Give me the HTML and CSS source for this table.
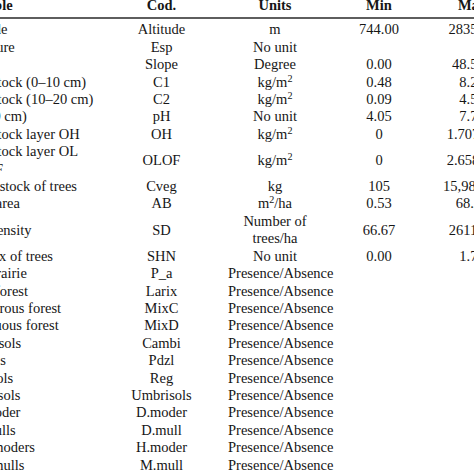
FILE: index.html
```html
<!DOCTYPE html>
<html lang="en">
<head>
<meta charset="utf-8">
<title>Variables</title>
<link rel="stylesheet" href="styles.css">
</head>
<body>
<table class="stats">
  <colgroup>
    <col class="c-var">
    <col class="c-cod">
    <col class="c-unit">
    <col class="c-min">
    <col class="c-max">
  </colgroup>
  <thead>
    <tr>
      <th class="lbl">Variable</th>
      <th>Cod.</th>
      <th>Units</th>
      <th>Min</th>
      <th>Max</th>
    </tr>
  </thead>
  <tbody>
    <tr><td class="lbl">Altitude</td><td>Altitude</td><td>m</td><td>744.00</td><td>2835.00</td></tr>
    <tr><td class="lbl">Exposure</td><td>Esp</td><td>No unit</td><td></td><td></td></tr>
    <tr><td class="lbl">Slope</td><td>Slope</td><td>Degree</td><td>0.00</td><td>48.590</td></tr>
    <tr><td class="lbl">SOC stock (0–10 cm)</td><td>C1</td><td>kg/m<sup>2</sup></td><td>0.48</td><td>8.25</td></tr>
    <tr><td class="lbl">SOC stock (10–20 cm)</td><td>C2</td><td>kg/m<sup>2</sup></td><td>0.09</td><td>4.55</td></tr>
    <tr><td class="lbl">pH (20 cm)</td><td>pH</td><td>No unit</td><td>4.05</td><td>7.75</td></tr>
    <tr><td class="lbl">SOC stock layer OH</td><td>OH</td><td>kg/m<sup>2</sup></td><td>0</td><td>1.707,88</td></tr>
    <tr><td class="lbl">SOC stock layer OL and OF</td><td>OLOF</td><td>kg/m<sup>2</sup></td><td>0</td><td>2.658,15</td></tr>
    <tr><td class="lbl">Tot. C stock of trees</td><td>Cveg</td><td>kg</td><td>105</td><td>15,987.00</td></tr>
    <tr><td class="lbl">Basal area</td><td>AB</td><td>m<sup>2</sup>/ha</td><td>0.53</td><td>68.25</td></tr>
    <tr><td class="lbl">Tree density</td><td>SD</td><td>Number of trees/ha</td><td>66.67</td><td>2611.00</td></tr>
    <tr><td class="lbl">H index of trees</td><td>SHN</td><td>No unit</td><td>0.00</td><td>1.75</td></tr>
    <tr><td class="lbl">Alp. prairie</td><td>P_a</td><td class="pa">Presence/Absence</td><td></td><td></td></tr>
    <tr><td class="lbl">Larix forest</td><td>Larix</td><td class="pa">Presence/Absence</td><td></td><td></td></tr>
    <tr><td class="lbl">Coniferous forest</td><td>MixC</td><td class="pa">Presence/Absence</td><td></td><td></td></tr>
    <tr><td class="lbl">Deciduous forest</td><td>MixD</td><td class="pa">Presence/Absence</td><td></td><td></td></tr>
    <tr><td class="lbl">Cambisols</td><td>Cambi</td><td class="pa">Presence/Absence</td><td></td><td></td></tr>
    <tr><td class="lbl">Podzols</td><td>Pdzl</td><td class="pa">Presence/Absence</td><td></td><td></td></tr>
    <tr><td class="lbl">Regosols</td><td>Reg</td><td class="pa">Presence/Absence</td><td></td><td></td></tr>
    <tr><td class="lbl">Umbrisols</td><td>Umbrisols</td><td class="pa">Presence/Absence</td><td></td><td></td></tr>
    <tr><td class="lbl">Dysmoder</td><td>D.moder</td><td class="pa">Presence/Absence</td><td></td><td></td></tr>
    <tr><td class="lbl">Dysmulls</td><td>D.mull</td><td class="pa">Presence/Absence</td><td></td><td></td></tr>
    <tr><td class="lbl">Hemimoders</td><td>H.moder</td><td class="pa">Presence/Absence</td><td></td><td></td></tr>
    <tr><td class="lbl">Mesomulls</td><td>M.mull</td><td class="pa">Presence/Absence</td><td></td><td></td></tr>
  </tbody>
</table>
</body>
</html>
```
FILE: styles.css
```css
html, body {
  margin: 0;
  padding: 0;
  overflow: hidden;
  background: #ffffff;
}

body {
  font-family: "Liberation Serif", "Times New Roman", serif;
  font-size: 14.5px;
  line-height: 17.4px;
  color: #161616;
}

.stats {
  border-collapse: collapse;
  table-layout: fixed;
  width: 549px;
  margin: -3px 0 0 -40px;
}

.c-var { width: 136px; }
.c-cod { width: 131px; }
.c-unit { width: 96px; }
.c-min { width: 112px; }
.c-max { width: 74px; }

.stats th,
.stats td {
  padding: 0;
  text-align: center;
  vertical-align: middle;
  font-weight: normal;
}

.stats thead th {
  font-weight: bold;
  padding-bottom: 3px;
  border-bottom: 2px solid #5e5e5e;
  white-space: nowrap;
}

.stats tbody tr:first-child td {
  padding-top: 2px;
}

.stats .lbl {
  text-align: left;
}

.stats td:nth-child(4),
.stats td:nth-child(5) {
  white-space: nowrap;
}

.stats .pa {
  text-align: left;
  padding-left: 1px;
  white-space: nowrap;
}

sup {
  font-size: 0.7em;
  line-height: 0;
  vertical-align: 0.45em;
}
```
